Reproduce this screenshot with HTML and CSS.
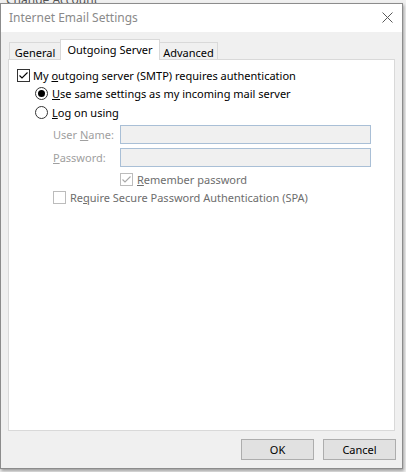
FILE: index.html
```html
<!DOCTYPE html>
<html>
<head>
<meta charset="utf-8">
<link rel="stylesheet" href="styles.css">
</head>
<body>
<div class="backwin">
  <div class="backtitle">Change Account</div>
</div>
<div class="dialog">
  <div class="titlebar">
    <span class="title">Internet Email Settings</span>
    <svg class="close" width="11" height="11" viewBox="0 0 11 11"><path d="M0.5 0.5 L10.5 10.5 M10.5 0.5 L0.5 10.5" stroke="#5a5a5a" stroke-width="1" fill="none"/></svg>
  </div>
  <div class="content">
    <div class="tabs">
      <div class="tab">General</div>
      <div class="tab selected">Outgoing Server</div>
      <div class="tab">Advanced</div>
    </div>
    <div class="panel">
      <div class="row r1">
        <span class="cb"><svg width="11" height="11" viewBox="0 0 11 11"><path d="M1.5 5.5 L4 8 L9.5 2.5" stroke="#000" stroke-width="1.1" fill="none"/></svg></span>
        <span class="lbl">My <u>o</u>utgoing server (SMTP) requires authentication</span>
      </div>
      <div class="row r2 ind1">
        <span class="radio on"></span>
        <span class="lbl l4"><u>U</u>se same settings as my incoming mail server</span>
      </div>
      <div class="row r3 ind1">
        <span class="radio"></span>
        <span class="lbl l4"><u>L</u>og on using</span>
      </div>
      <div class="row r4 ind2">
        <span class="flabel">User <u>N</u>ame:</span>
        <span class="input"></span>
      </div>
      <div class="row r5 ind2">
        <span class="flabel"><u>P</u>assword:</span>
        <span class="input"></span>
      </div>
      <div class="row r6 ind3">
        <span class="cb dis"><svg width="11" height="11" viewBox="0 0 11 11"><path d="M1.5 5.5 L4 8 L9.5 2.5" stroke="#a8a8a8" stroke-width="1.1" fill="none"/></svg></span>
        <span class="lbl dlbl"><u>R</u>emember password</span>
      </div>
      <div class="row r7 ind2">
        <span class="cb dis"></span>
        <span class="lbl dlbl">Re<u>q</u>uire Secure Password Authentication (SPA)</span>
      </div>
    </div>
    <div class="buttons">
      <div class="btn">OK</div>
      <div class="btn">Cancel</div>
    </div>
  </div>
</div>
</body>
</html>
```
FILE: styles.css
```css
html, body {
  margin: 0;
  padding: 0;
}
body {
  width: 406px;
  height: 472px;
  overflow: hidden;
  position: relative;
  background: #f0f0f0;
  font-family: "Noto Sans", "Open Sans", sans-serif;
  font-size: 11px;
  color: #000;
}
.backwin {
  height: 472px;
  background: #f0f0f0;
}
.backtitle {
  padding-left: 6px;
  margin-top: -9px;
  font-size: 12px;
  color: #555;
}
.dialog {
  position: absolute;
  left: 0;
  top: 3px;
  width: 401px;
  height: 464px;
  border: 1px solid #8c8c8c;
  background: #f0f0f0;
  box-shadow: 1px 2px 3px rgba(0,0,0,0.35);
  display: flex;
  flex-direction: column;
}
.titlebar {
  height: 28px;
  background: #fff;
  display: flex;
  align-items: center;
  justify-content: space-between;
  padding: 0 9px 2px 8px;
  box-sizing: border-box;
}
.title {
  font-size: 12px;
  color: #8a8a8a;
}
.close {
  margin-top: 1px;
}
.content {
  padding: 7px 7px 0 7px;
  display: flex;
  flex-direction: column;
}
.tabs {
  display: flex;
  align-items: flex-end;
  height: 20px;
  margin-left: 1px;
  position: relative;
  z-index: 1;
}
.tab {
  box-sizing: border-box;
  height: 17px;
  border: 1px solid #d9d9d9;
  border-bottom: 0;
  background: #f0f0f0;
  display: flex;
  align-items: center;
  justify-content: center;
  padding-top: 2px;
}
.tab:first-child { width: 52px; }
.tab + .tab { margin-left: -1px; }
.tab.selected {
  width: 100px;
  height: 21px;
  margin-bottom: -1px;
  background: #fff;
  padding-top: 0;
  padding-bottom: 1px;
}
.tab:last-child { width: 59px; }
.panel {
  box-sizing: border-box;
  height: 372px;
  border: 1px solid #d9d9d9;
  background: #fff;
  padding-top: 6px;
  padding-left: 8px;
  display: flex;
  flex-direction: column;
}
.row {
  display: flex;
  align-items: center;
  height: 18px;
}
.r3 { height: 20px; }
.r4 { height: 19px; margin-top: 3px; }
.r5 { height: 19px; margin-top: 4px; }
.r6 { margin-top: 3px; }
.ind1 { padding-left: 18px; }
.ind2 { padding-left: 36px; }
.ind3 { padding-left: 103px; }
.cb {
  box-sizing: border-box;
  width: 13px;
  height: 13px;
  border: 1px solid #333;
  background: #fff;
  display: flex;
  flex: none;
}
.cb.dis { border-color: #bcbcbc; }
.radio {
  box-sizing: border-box;
  width: 13px;
  height: 13px;
  border: 1px solid #333;
  border-radius: 50%;
  background: #fff;
  flex: none;
  display: flex;
  align-items: center;
  justify-content: center;
}
.radio.on::after {
  content: "";
  width: 7px;
  height: 7px;
  border-radius: 50%;
  background: #000;
}
.lbl {
  margin-left: 3px;
  white-space: nowrap;
}
.lbl.l4 { margin-left: 4px; }
.dlbl { color: #6d6d6d; margin-left: 4px; }
.flabel {
  width: 67px;
  color: #a0a0a0;
  white-space: nowrap;
}
.input {
  box-sizing: border-box;
  width: 251px;
  height: 19px;
  border: 1px solid #a9bfd6;
  background: #f0f0f0;
}
.buttons {
  display: flex;
  justify-content: flex-end;
  gap: 9px;
  margin-top: 8px;
  margin-right: -1px;
}
.btn {
  box-sizing: border-box;
  width: 73px;
  height: 21px;
  border: 1px solid #adadad;
  background: #e1e1e1;
  display: flex;
  align-items: center;
  justify-content: center;
}
```
